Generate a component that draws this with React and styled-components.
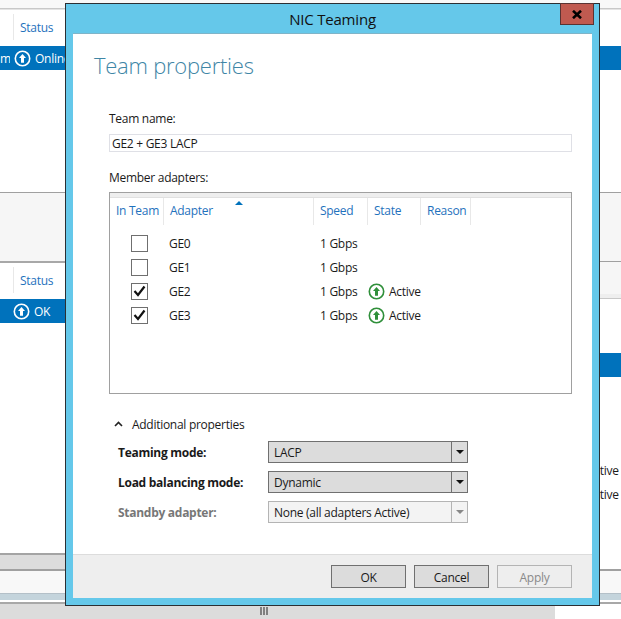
import React from 'react'
import styled, { createGlobalStyle } from 'styled-components'

const Global = createGlobalStyle`
  html, body { margin: 0; padding: 0; background: white; }
  body { font-family: "Open Sans", "Noto Sans", sans-serif; font-size: 12px; letter-spacing: -0.28px; color: #1a1a1a; }
  * { box-sizing: border-box; }
`

const Page = styled.div`
  position: relative;
  width: 621px;
  height: 619px;
  overflow: hidden;
  display: flex;
`

/* server manager panes behind the dialog */
const LeftPane = styled.div`
  width: 555px;
  flex: none;
  height: 619px;
  display: flex;
  flex-direction: column;
`
const RightPane = styled.div`
  flex: 1;
  min-width: 0;
  overflow: hidden;
  display: flex;
  flex-direction: column;
`
const TopStrip = styled.div`
  height: 9px;
  background: #f8f8f8;
  border-bottom: 1px solid #c8c8c8;
  flex: none;
`
const ColHead = styled.div`
  height: 36px;
  flex: none;
  background: white;
  padding: 4px 0 0 13px;
  display: flex;
`
const ColLabel = styled.div`
  border-left: 1px solid #e8e8e8;
  padding: 0 0 0 6px;
  height: 26px;
  line-height: 28px;
  color: #1f72bd;
`
const BlueRow = styled.div`
  height: 24px;
  flex: none;
  background: #0072bc;
  color: white;
  display: flex;
  align-items: center;
  gap: 4px;
  padding-left: ${p => p.$pad}px;
  white-space: nowrap;
`
const CutText = styled.div`
  width: 10px;
  overflow: hidden;
`
const WhiteFill = styled.div`
  height: ${p => p.$h}px;
  flex: none;
  background: white;
`
const GreyBlock = styled.div`
  height: ${p => p.$h}px;
  flex: none;
  background: #f6f6f6;
  border-top: 1px solid #a0a0a0;
`
const PaleStep = styled.div`
  height: 5px;
  flex: none;
  background: #eeeeee;
  border-bottom: 1px solid #c8c8c8;
`
const Divider = styled.div`
  height: 2px;
  flex: none;
  background: #a8a8a8;
`
const ThinGap = styled.div`
  height: 1px;
  flex: none;
  background: #e4e4e4;
`
const TrackBand = styled.div`
  height: 16px;
  flex: none;
  background: #dcdcdc;
  border-top: 2px solid #a4a4a4;
`
const LightBand = styled.div`
  height: 24px;
  flex: none;
  background: #f8f8f8;
  border-top: 2px solid #a0a0a0;
`
const TintBand = styled.div`
  height: 7px;
  flex: none;
  background: #c4d4dc;
  border-top: 1px solid #b4c0c8;
`
const BottomLine = styled.div`
  height: 4px;
  flex: none;
  background: white;
  border-bottom: 2px solid #a8a8a8;
`
const Scrollbar = styled.div`
  flex: 1;
  background: #dcdcdc;
  padding: 3px 0 0 260px;
`
const Grip = styled.div`
  width: 8px;
  height: 8px;
  background: repeating-linear-gradient(90deg, #808080 0 2px, #dcdcdc 2px 3px);
`
const RightWhite = styled.div`
  flex: 1;
  background: white;
`
const SideText = styled.div`
  height: 24px;
  line-height: 24px;
  padding-left: 32px;
  white-space: nowrap;
  flex: none;
`
const StatusIcon = styled.svg`
  width: 17px;
  height: 17px;
  flex: none;
  display: block;
`

function UpIcon({ color }) {
  return (
    <StatusIcon viewBox="0 0 17 17">
      <circle cx="8.5" cy="8.5" r="7.2" fill="none" stroke={color} strokeWidth="1.6" />
      <path d="M8.5 4 L12 8 H10 V12.8 H7 V8 H5 Z" fill={color} />
    </StatusIcon>
  )
}

/* dialog */
const Dialog = styled.div`
  position: absolute;
  left: 65px;
  top: 3px;
  width: 535px;
  height: 603px;
  background: #65c8ea;
  border: 1px solid #2b2f33;
  padding: 0 7px 7px;
  display: flex;
  flex-direction: column;
`
const TitleBar = styled.div`
  height: 30px;
  flex: none;
  display: flex;
  align-items: center;
  justify-content: center;
  font-size: 15px;
  letter-spacing: -0.2px;
  color: #111;
  position: relative;
  padding-bottom: 1px;
`
const CloseBtn = styled.div`
  position: absolute;
  right: -2px;
  top: -1px;
  width: 34px;
  height: 22px;
  background: #c05a50;
  border: 1px solid #5a3332;
  display: flex;
  align-items: center;
  justify-content: center;
`
const Body = styled.div`
  flex: 1;
  background: white;
  display: flex;
  flex-direction: column;
  border-top: 1px solid #7fb4c8;
  margin-top: -1px;
`
const Content = styled.div`
  flex: 1;
  padding: 13px 20px 0 36px;
`
const Heading = styled.div`
  font-size: 22px;
  font-weight: 300;
  letter-spacing: -0.25px;
  color: #3f86a6;
  line-height: 36px;
  margin-left: -15px;
`
const Label = styled.div`
  line-height: 16px;
  color: #1a1a1a;
  margin-top: ${p => p.$top}px;
`
const TextInput = styled.div`
  height: 18px;
  margin-top: 7px;
  border: 1px solid #dfe0e6;
  line-height: 17px;
  padding-left: 2px;
`
const ListBox = styled.div`
  height: 202px;
  margin-top: 6px;
  border: 1px solid #a0a0a0;
`
const ListStrip = styled.div`
  height: 5px;
  background: #eeeeee;
  border-bottom: 1px solid #e0e0e0;
`
const cols = '54px 150px 54px 53px 50px'
const HeadRow = styled.div`
  display: grid;
  grid-template-columns: ${cols};
  height: 27px;
  position: relative;
`
const HeadCell = styled.div`
  color: #1f72bd;
  line-height: 26px;
  padding-left: 6px;
  border-right: 1px solid #e8e8e8;
`
const SortArrow = styled.svg`
  position: absolute;
  left: 125px;
  top: 3px;
  width: 8px;
  height: 4px;
`
const Rows = styled.div`
  padding-top: 6px;
  display: flex;
  flex-direction: column;
`
const Row = styled.div`
  display: grid;
  grid-template-columns: ${cols};
  height: 24px;
  align-items: center;
`
const Check = styled.div`
  width: 17px;
  height: 17px;
  margin-left: 21px;
  border: 1px solid #6f6f6f;
  background: white;
  display: flex;
  align-items: center;
  justify-content: center;
`
const AdapterCell = styled.div`
  padding-left: 5px;
`
const SpeedCell = styled.div`
  padding-left: 6px;
`
const StateCell = styled.div`
  display: flex;
  align-items: center;
  gap: 4px;
  white-space: nowrap;
`
const Expander = styled.div`
  display: flex;
  align-items: center;
  height: 16px;
  margin: 22px 0 9px 5px;
  gap: 9px;
`
const PropRow = styled.div`
  display: flex;
  align-items: center;
  height: 22px;
  margin-bottom: 8px;
  padding-left: 9px;
`
const PropLabel = styled.div`
  width: 150px;
  font-weight: 700;
  color: ${p => (p.$off ? '#777' : '#1a1a1a')};
`
const Select = styled.div`
  width: 200px;
  height: 22px;
  display: flex;
  background: ${p => (p.$off ? '#f3f3f3' : '#dcdcdc')};
  border: 1px solid ${p => (p.$off ? '#b4b4b4' : '#707070')};
`
const SelectValue = styled.div`
  flex: 1;
  padding-left: 5px;
  line-height: 21px;
`
const SelectArrow = styled.div`
  width: 16px;
  border-left: 1px solid ${p => (p.$off ? '#b4b4b4' : '#707070')};
  display: flex;
  align-items: center;
  justify-content: center;
`
const Footer = styled.div`
  height: 44px;
  flex: none;
  background: #eeeeee;
  border-top: 1px solid #dcdcdc;
  display: flex;
  justify-content: flex-end;
  align-items: flex-start;
  gap: 8px;
  padding: 10px 20px 0 0;
`
const Button = styled.div`
  width: 75px;
  height: 23px;
  padding-top: 1px;
  display: flex;
  align-items: center;
  justify-content: center;
  background: ${p => (p.$off ? '#eeeeee' : '#dcdcdc')};
  border: 1px solid ${p => (p.$off ? '#b4b4b4' : '#707070')};
  color: ${p => (p.$off ? '#8a8a8a' : '#1a1a1a')};
`

const adapters = [
  { name: 'GE0', on: false },
  { name: 'GE1', on: false },
  { name: 'GE2', on: true },
  { name: 'GE3', on: true },
]

function Triangle({ color }) {
  return (
    <svg width="8" height="4" viewBox="0 0 8 4"><path d="M0 0H8L4 4Z" fill={color} /></svg>
  )
}

export default function App() {
  return (
    <Page>
      <Global />
      <LeftPane>
        <TopStrip />
        <ThinGap />
        <ColHead><ColLabel>Status</ColLabel></ColHead>
        <BlueRow $pad={0}><CutText>m</CutText><UpIcon color="white" />Online</BlueRow>
        <WhiteFill $h={122} />
        <GreyBlock $h={69} />
        <Divider />
        <ColHead><ColLabel>Status</ColLabel></ColHead>
        <BlueRow $pad={13}><UpIcon color="white" />OK</BlueRow>
        <WhiteFill $h={230} />
        <TrackBand />
        <LightBand />
        <TintBand />
        <BottomLine />
        <Scrollbar><Grip /></Scrollbar>
      </LeftPane>
      <RightPane>
        <TopStrip />
        <ThinGap />
        <WhiteFill $h={36} />
        <BlueRow $pad={0} />
        <WhiteFill $h={122} />
        <GreyBlock $h={69} />
        <GreyBlock $h={33} />
        <PaleStep />
        <WhiteFill $h={54} />
        <BlueRow $pad={0} />
        <WhiteFill $h={82} />
        <SideText>Active</SideText>
        <SideText>Active</SideText>
        <WhiteFill $h={62} />
        <LightBand />
        <TintBand />
        <BottomLine />
        <RightWhite />
      </RightPane>

      <Dialog>
        <TitleBar>
          NIC Teaming
          <CloseBtn>
            <svg width="10" height="9" viewBox="0 0 10 9"><path d="M1 0.8 L9 8.2 M9 0.8 L1 8.2" stroke="#000" strokeWidth="2.6" /></svg>
          </CloseBtn>
        </TitleBar>
        <Body>
          <Content>
            <Heading>Team properties</Heading>
            <Label $top={28}>Team name:</Label>
            <TextInput>GE2 + GE3 LACP</TextInput>
            <Label $top={18}>Member adapters:</Label>
            <ListBox>
              <ListStrip />
              <HeadRow>
                <HeadCell>In Team</HeadCell>
                <HeadCell>Adapter</HeadCell>
                <HeadCell>Speed</HeadCell>
                <HeadCell>State</HeadCell>
                <HeadCell>Reason</HeadCell>
                <SortArrow viewBox="0 0 8 4"><path d="M0 4H8L4 0Z" fill="#0072bc" /></SortArrow>
              </HeadRow>
              <Rows>
                {adapters.map(a => (
                  <Row key={a.name}>
                    <Check>
                      {a.on && (
                        <svg width="13" height="12" viewBox="0 0 13 12"><path d="M1.5 6 L5 10 L11.5 1.5" fill="none" stroke="#111" strokeWidth="2.2" /></svg>
                      )}
                    </Check>
                    <AdapterCell>{a.name}</AdapterCell>
                    <SpeedCell>1 Gbps</SpeedCell>
                    <StateCell>
                      {a.on && <><UpIcon color="#2f8f3a" />Active</>}
                    </StateCell>
                  </Row>
                ))}
              </Rows>
            </ListBox>
            <Expander>
              <svg width="9" height="6" viewBox="0 0 9 6"><path d="M1 5 L4.5 1.5 L8 5" fill="none" stroke="#222" strokeWidth="1.6" /></svg>
              Additional properties
            </Expander>
            <PropRow>
              <PropLabel>Teaming mode:</PropLabel>
              <Select><SelectValue>LACP</SelectValue><SelectArrow><Triangle color="#111" /></SelectArrow></Select>
            </PropRow>
            <PropRow>
              <PropLabel>Load balancing mode:</PropLabel>
              <Select><SelectValue>Dynamic</SelectValue><SelectArrow><Triangle color="#111" /></SelectArrow></Select>
            </PropRow>
            <PropRow>
              <PropLabel $off>Standby adapter:</PropLabel>
              <Select $off><SelectValue>None (all adapters Active)</SelectValue><SelectArrow $off><Triangle color="#888" /></SelectArrow></Select>
            </PropRow>
          </Content>
          <Footer>
            <Button>OK</Button>
            <Button>Cancel</Button>
            <Button $off>Apply</Button>
          </Footer>
        </Body>
      </Dialog>
    </Page>
  )
}
